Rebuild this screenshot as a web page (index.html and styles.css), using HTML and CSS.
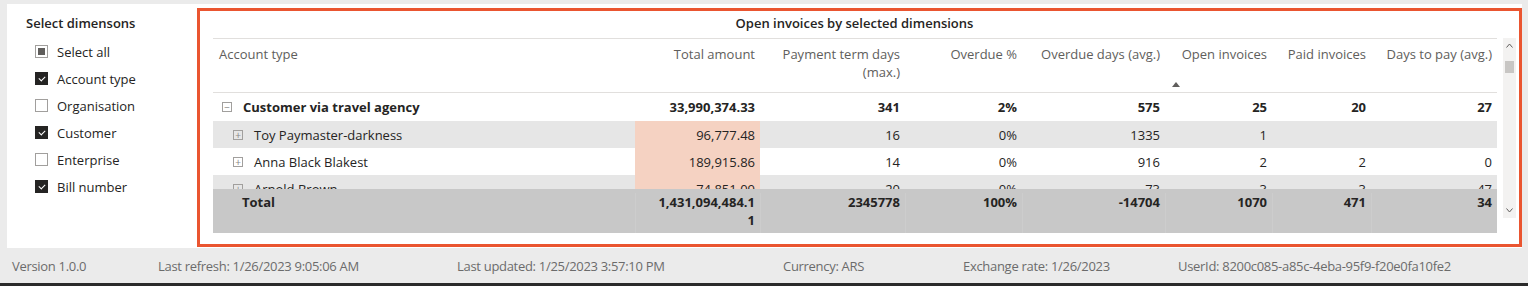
FILE: index.html
```html
<!doctype html>
<html lang="en">
    <head>
        <meta charset="UTF-8" />
        <meta name="viewport" content="width=device-width, initial-scale=1.0" />
        <title>Open invoices</title>
        <link rel="stylesheet" href="styles.css">
    </head>
    <body>
        <div class="canvas">
            <div class="sidebar">
                <h2>Select dimensons</h2>
                <ul class="dimensions">
                    <li><span class="box partial"></span>Select all</li>
                    <li><span class="box checked"></span>Account type</li>
                    <li><span class="box"></span>Organisation</li>
                    <li><span class="box checked"></span>Customer</li>
                    <li><span class="box"></span>Enterprise</li>
                    <li><span class="box checked"></span>Bill number</li>
                </ul>
            </div>

            <div class="visual">
                <div class="visual-title">Open invoices by selected dimensions</div>
                <div class="matrix-wrap">
                    <div class="matrix">
                        <div class="row head">
                            <div class="cell first">Account type</div>
                            <div class="cell">Total amount</div>
                            <div class="cell">Payment term days (max.)</div>
                            <div class="cell">Overdue %</div>
                            <div class="cell">Overdue days (avg.)</div>
                            <div class="cell sorted">Open invoices</div>
                            <div class="cell">Paid invoices</div>
                            <div class="cell">Days to pay (avg.)</div>
                        </div>

                        <div class="body">
                            <div class="row group">
                                <div class="cell first"><span class="toggle">&minus;</span>Customer via travel agency</div>
                                <div class="cell">33,990,374.33</div>
                                <div class="cell">341</div>
                                <div class="cell">2%</div>
                                <div class="cell">575</div>
                                <div class="cell">25</div>
                                <div class="cell">20</div>
                                <div class="cell">27</div>
                            </div>
                            <div class="row item odd">
                                <div class="cell first"><span class="toggle">+</span>Toy Paymaster-darkness</div>
                                <div class="cell amount">96,777.48</div>
                                <div class="cell">16</div>
                                <div class="cell">0%</div>
                                <div class="cell">1335</div>
                                <div class="cell">1</div>
                                <div class="cell"></div>
                                <div class="cell"></div>
                            </div>
                            <div class="row item">
                                <div class="cell first"><span class="toggle">+</span>Anna Black Blakest</div>
                                <div class="cell amount">189,915.86</div>
                                <div class="cell">14</div>
                                <div class="cell">0%</div>
                                <div class="cell">916</div>
                                <div class="cell">2</div>
                                <div class="cell">2</div>
                                <div class="cell">0</div>
                            </div>
                            <div class="row item odd">
                                <div class="cell first"><span class="toggle">+</span>Arnold Brown</div>
                                <div class="cell amount">74,851.09</div>
                                <div class="cell">20</div>
                                <div class="cell">0%</div>
                                <div class="cell">73</div>
                                <div class="cell">3</div>
                                <div class="cell">3</div>
                                <div class="cell">47</div>
                            </div>
                        </div>

                        <div class="row total">
                            <div class="cell first">Total</div>
                            <div class="cell">1,431,094,484.1<br>1</div>
                            <div class="cell">2345778</div>
                            <div class="cell">100%</div>
                            <div class="cell">-14704</div>
                            <div class="cell">1070</div>
                            <div class="cell">471</div>
                            <div class="cell">34</div>
                        </div>
                    </div>

                    <div class="scrollbar">
                        <svg class="arrow" width="7" height="5" viewBox="0 0 7 5"><path d="M0.5 4.5 L3.5 1 L6.5 4.5" fill="none" stroke="#605e5c" stroke-width="1"/></svg>
                        <span class="thumb"></span>
                        <span class="spacer"></span>
                        <svg class="arrow" width="7" height="5" viewBox="0 0 7 5"><path d="M0.5 0.5 L3.5 4 L6.5 0.5" fill="none" stroke="#605e5c" stroke-width="1"/></svg>
                    </div>
                </div>
            </div>
        </div>

        <div class="footer">
            <span class="version">Version 1.0.0</span>
            <span class="refresh">Last refresh: 1/26/2023 9:05:06 AM</span>
            <span class="updated">Last updated: 1/25/2023 3:57:10 PM</span>
            <span class="currency">Currency: ARS</span>
            <span class="rate">Exchange rate: 1/26/2023</span>
            <span class="user">UserId: 8200c085-a85c-4eba-95f9-f20e0fa10fe2</span>
        </div>
    </body>
</html>
```

FILE: styles.css
```css
* {
    margin: 0;
    padding: 0;
    box-sizing: border-box;
}

body {
    font-family: "Open Sans", "Noto Sans", sans-serif;
    font-size: 13px;
    color: #252423;
    background: #ebebeb;
    height: 286px;
    padding: 4px 6px 0 7px;
    border-bottom: 3px solid #2b2b2b;
    overflow: hidden;
}

.canvas {
    display: flex;
    height: 244px;
    background: #ffffff;
}

/* dimension picker */

.sidebar {
    width: 190px;
    padding: 9px 0 0 19px;
}

.sidebar h2 {
    font-size: 13px;
    font-weight: 600;
    line-height: 20px;
    margin-bottom: 5px;
}

.dimensions {
    list-style: none;
    padding-left: 9px;
}

.dimensions li {
    display: flex;
    align-items: center;
    gap: 9px;
    height: 27px;
    line-height: 18px;
}

.box {
    width: 13px;
    height: 13px;
    border: 1px solid #a19f9d;
    background: #ffffff;
    position: relative;
}

.box.checked {
    background: #252423;
    border-color: #252423;
}

.box.checked::after {
    content: "";
    position: absolute;
    left: 3px;
    top: 3px;
    width: 5px;
    height: 3px;
    border-left: 1px solid #ffffff;
    border-bottom: 1px solid #ffffff;
    transform: rotate(-45deg);
}

.box.partial::after {
    content: "";
    position: absolute;
    left: 2px;
    top: 2px;
    width: 7px;
    height: 7px;
    background: #605e5c;
}

/* matrix visual */

.visual {
    flex: 1;
    margin-top: 4px;
    height: 239px;
    border: 3px solid #ea5530;
    padding: 0 3px 0 13px;
}

.visual-title {
    text-align: center;
    font-weight: 600;
    line-height: 18px;
    padding: 3px 0 6px;
    margin-right: 20px;
}

.matrix-wrap {
    display: flex;
    gap: 6px;
}

.matrix {
    width: 1284px;
}

.row {
    display: grid;
    grid-template-columns: 422px 125px 145px 117px 143px 107px 99px 126px;
}

.cell {
    text-align: right;
    padding: 0 5px 0 0;
    white-space: nowrap;
    line-height: 18px;
}

.cell.first {
    text-align: left;
    display: flex;
    align-items: center;
}

.head {
    height: 55px;
    border-top: 1px solid #e1dfdd;
    border-bottom: 1px solid #e1dfdd;
    color: #605e5c;
}

.head .cell {
    white-space: normal;
    padding-top: 6px;
}

.head .cell.first {
    align-items: flex-start;
    padding-left: 6px;
}

.head .cell:nth-child(3) {
    padding-left: 20px;
}

.head .sorted {
    position: relative;
}

.head .sorted::after {
    content: "";
    position: absolute;
    left: 7px;
    top: 43px;
    border-left: 4px solid transparent;
    border-right: 4px solid transparent;
    border-bottom: 5px solid #605e5c;
}

.body {
    height: 96px;
    overflow: hidden;
}

.group {
    height: 28px;
    align-items: center;
    font-weight: 700;
}

.group .cell.first {
    padding-left: 9px;
}

.item {
    height: 27px;
    align-items: center;
    color: #252423;
}

.item .cell {
    height: 100%;
    display: flex;
    align-items: center;
    justify-content: flex-end;
}

.item .cell.first {
    justify-content: flex-start;
    padding-left: 20px;
}

.item.odd {
    background: #e6e6e6;
}

.item .amount {
    background: #f5d2c2;
}

.toggle {
    width: 10px;
    height: 10px;
    border: 1px solid #a19f9d;
    color: #8a8886;
    font-size: 10px;
    font-weight: 400;
    line-height: 8px;
    text-align: center;
    margin-right: 11px;
}

.total {
    height: 44px;
    background: #c8c8c8;
    font-weight: 700;
    padding-top: 4px;
}

.total .cell {
    border-left: 1px solid #cdcdcd;
}

.total .cell.first {
    align-items: flex-start;
    padding-left: 29px;
    border-left: 0;
}

/* scrollbar */

.scrollbar {
    width: 13px;
    height: 180px;
    background: #f3f2f1;
    display: flex;
    flex-direction: column;
    align-items: center;
}

.arrow {
    margin: 5px 0;
}

.thumb {
    width: 9px;
    height: 12px;
    margin-top: 8px;
    background: #c8c6c4;
}

.spacer {
    flex: 1;
}

/* status bar */

.footer {
    display: flex;
    height: 35px;
    align-items: center;
    padding-left: 5px;
    color: #6b6b6b;
    font-size: 13px;
    letter-spacing: -0.3px;
}

.version {
    width: 146px;
}

.refresh {
    width: 299px;
}

.updated {
    width: 326px;
}

.currency {
    width: 180px;
}

.rate {
    width: 215px;
}
```
